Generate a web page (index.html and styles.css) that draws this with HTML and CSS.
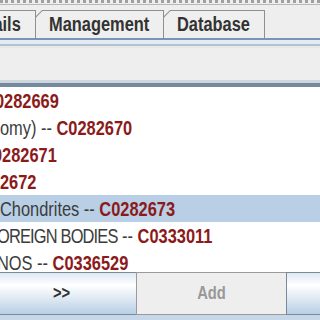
FILE: index.html
```html
<!DOCTYPE html>
<html lang="en">
<head>
  <meta charset="UTF-8" />
  <title>Concept browser</title>
  <link rel="stylesheet" href="styles.css">
</head>
<body>

<div class="top-edge"></div>

<div class="tabs">
  <div class="tab tab-details"><span class="tab-face"><span class="squeeze">Details</span></span></div>
  <div class="tab tab-management"><span class="tab-face"><span class="squeeze">Management</span></span></div>
  <div class="tab tab-database"><span class="tab-face"><span class="squeeze">Database</span></span></div>
</div>
<div class="tab-rule"></div>

<div class="toolbar"></div>

<ul class="concepts">
  <li class="row"><span class="squeeze cut-5"><span class="code">0282669</span></span></li>
  <li class="row"><span class="squeeze">omy) -- <span class="code">C0282670</span></span></li>
  <li class="row"><span class="squeeze cut-7"><span class="code">0282671</span></span></li>
  <li class="row"><span class="squeeze"><span class="code">2672</span></span></li>
  <li class="row selected"><span class="squeeze">Chondrites -- <span class="code">C0282673</span></span></li>
  <li class="row"><span class="squeeze cut-3"><span class="caps">OREIGN BODIES</span> -- <span class="code">C0333011</span></span></li>
  <li class="row"><span class="squeeze cut-3">NOS -- <span class="code">C0336529</span></span></li>
</ul>

<div class="actions">
  <button class="btn"><span class="squeeze">&gt;&gt;</span></button>
  <button class="btn" disabled><span class="squeeze">Add</span></button>
  <button class="btn"><span class="squeeze">Remove</span></button>
</div>
<div class="bottom-strip"></div>

</body>
</html>
```

FILE: styles.css
```css
* {
  box-sizing: border-box;
}
html, body {
  margin: 0;
  padding: 0;
}
body {
  width: 320px;
  height: 320px;
  overflow: hidden;
  background: #eeeeee;
  font-family: "Liberation Sans", Arial, sans-serif;
  color: #3a3a3a;
}

/* the old Swing font is tall and narrow */
.squeeze {
  display: inline-block;
  transform: scaleX(0.82);
  transform-origin: left center;
}

/* strip of the panel above */
.top-edge {
  height: 5px;
  border-top: 3px dotted #a0a0a0;
  border-bottom: 1px solid #b8b8b8;
}

/* tabs */
.tabs {
  display: flex;
  height: 28px;
  margin: 5px 0 0 -47px;
}
.tab {
  background: #8f8f8f;
  padding: 1px 1px 0;
  margin-right: -1px;
  clip-path: polygon(7px 0, 100% 0, 100% 100%, 0 100%, 0 7px);
}
.tab-details { width: 83px; }
.tab-management { width: 129px; }
.tab-database { width: 102px; }
.tab-face {
  display: block;
  height: 27px;
  padding: 0 0 0 13px;
  line-height: 27px;
  font-size: 20px;
  font-weight: bold;
  color: #333;
  white-space: nowrap;
  background: #efefef;
  clip-path: polygon(6.4px 0, 100% 0, 100% 100%, 0 100%, 0 6.4px);
}
.tab-rule {
  height: 10px;
  background: linear-gradient(#7a94b6 0 2px, #e2eaf3 2px 6px, #b4c2d0 6px 8px, #e8e8e8 8px);
}

.toolbar {
  height: 39px;
  background: linear-gradient(#eeeeee 0 32px, #cdd6df 32px 35px, #76889b 35px);
}

/* concept list */
.concepts {
  list-style: none;
  margin: 0;
  padding: 0;
  height: 185px;
  overflow: hidden;
  background: #fff;
}
.row {
  height: 27px;
  padding-top: 1px;
  line-height: 26px;
  font-size: 20px;
  white-space: nowrap;
  color: #3c3c3c;
}
.row.selected {
  background: #b8cfe5;
}
.cut-3 {
  margin-left: -3px;
}
.cut-5 {
  margin-left: -5px;
}
.cut-7 {
  margin-left: -7px;
}
.caps {
  letter-spacing: -1px;
}
.code {
  color: #8b1a1a;
  font-weight: bold;
}

/* buttons */
.actions {
  display: flex;
  height: 43px;
  margin-left: -14px;
}
.btn {
  flex: 0 0 151px;
  margin: 0 -1px 0 0;
  border: 1px solid #7a8a99;
  background: linear-gradient(#dde8f3, #ffffff 30%, #b8cfe5);
  font-family: inherit;
  font-size: 18px;
  font-weight: bold;
  color: #333;
  padding: 0;
}
.btn .squeeze {
  transform-origin: center;
}
.btn:disabled {
  background: #eeeeee;
  border-color: #9a9a9a;
  color: #999;
}
.bottom-strip {
  height: 5px;
  background: #c6d7ea;
}
```
